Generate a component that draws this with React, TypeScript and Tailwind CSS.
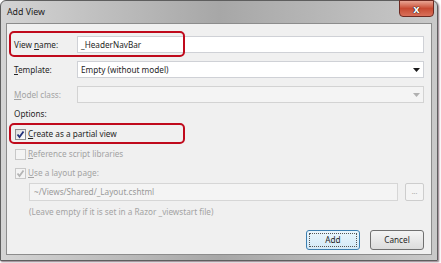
import React from 'react';

const font = { fontFamily: '"Noto Sans", "Open Sans", sans-serif' };

const Check: React.FC<{ checked?: boolean; disabled?: boolean }> = ({ checked, disabled }) => (
  <span
    className={`w-[11px] h-[11px] border flex items-center justify-center shrink-0 ${
      disabled ? 'border-[#c8c8c8] bg-[#f4f4f4]' : 'border-[#8e8f8f] bg-gradient-to-br from-[#dcdcdc] to-[#ffffff]'
    }`}
  >
    {checked && (
      <svg width="9" height="9" viewBox="0 0 9 9">
        <path
          d="M1.5 4.5 L3.5 7 L7.5 1.5"
          fill="none"
          stroke={disabled ? '#b4b4b4' : '#21307a'}
          strokeWidth="1.8"
        />
      </svg>
    )}
  </span>
);

const Arrow: React.FC<{ disabled?: boolean }> = ({ disabled }) => (
  <svg width="7" height="4" viewBox="0 0 7 4" className="mr-[3px]">
    <path d="M0 0 H7 L3.5 4 Z" fill={disabled ? '#b0b0b0' : '#1a1a1a'} />
  </svg>
);

export default function App() {
  return (
    <div className="w-[441px] h-[263px] bg-white text-[8.2px] leading-[12px]" style={font}>
      <div className="relative w-[438px] h-[261px] rounded-t-[6px] border border-[#5e5e5e] bg-gradient-to-r from-[#d4d4d4] via-[#a7a7a7] to-[#c9c9c9] flex flex-col shadow-[1px_1px_2px_rgba(60,20,40,0.6)]">
        {/* title bar */}
        <div className="h-[22px] flex items-center pl-[6px] text-[8.8px] text-[#1c1c1c]">Add View</div>
        <div className="absolute right-[3px] top-[-1px] w-[35px] h-[17px] rounded-b-[4px] border border-[#6d2a22] bg-gradient-to-b from-[#e8a493] via-[#c74a32] to-[#d9705a] flex items-center justify-center">
          <span className="text-white font-bold text-[11px] leading-none [text-shadow:0_0_1px_#000,0_0_1px_#000]">x</span>
        </div>

        {/* client area */}
        <div className="mx-[5px] h-[232px] border border-[#8c8c8c] bg-[#f0f0f0] pt-[12px] pl-[7px] pr-[7px] text-[#262626] flex flex-col">
          <div className="relative flex items-center h-[17px]">
            <span className="w-[63px] shrink-0">View <span className="underline">n</span>ame:</span>
            <div className="flex-1 h-[17px] bg-white border border-[#cfd1d6] flex items-center pl-[3px]">_HeaderNavBar</div>
            <div className="absolute left-[-5px] top-[-5px] w-[176px] h-[26px] rounded-[5px] border-2 border-[#c00a1c]" />
          </div>

          <div className="flex items-center h-[17px] mt-[8px]">
            <span className="w-[63px] shrink-0"><span className="underline">T</span>emplate:</span>
            <div className="flex-1 h-[17px] bg-white border border-[#cfd1d6] flex items-center justify-between pl-[3px]">
              <span>Empty (without model)</span>
              <Arrow />
            </div>
          </div>

          <div className="flex items-center h-[17px] mt-[8px]">
            <span className="w-[63px] shrink-0 text-[#a3a3a3]"><span className="underline">M</span>odel class:</span>
            <div className="flex-1 h-[17px] bg-[#f4f4f4] border border-[#d3d3d3] flex items-center justify-end">
              <Arrow disabled />
            </div>
          </div>

          <div className="mt-[5px] h-[12px]">Options:</div>

          <div className="relative flex items-center gap-[2px] h-[12px] mt-[8px] pl-[1px]">
            <Check checked />
            <span><span className="underline">C</span>reate as a partial view</span>
            <div className="absolute left-[-5px] top-[-5px] w-[176px] h-[21px] rounded-[5px] border-2 border-[#c00a1c]" />
          </div>

          <div className="flex items-center gap-[2px] h-[12px] mt-[8px] pl-[1px] text-[#a3a3a3]">
            <Check disabled />
            <span><span className="underline">R</span>eference script libraries</span>
          </div>

          <div className="flex items-center gap-[2px] h-[12px] mt-[7px] pl-[1px] text-[#a3a3a3]">
            <Check checked disabled />
            <span><span className="underline">U</span>se a layout page:</span>
          </div>

          <div className="flex items-center gap-[7px] h-[18px] mt-[4px] pl-[15px]">
            <div className="flex-1 h-[18px] bg-[#f4f4f4] border border-[#d6d6d6] flex items-center pl-[4px] text-[#9a9a9a]">
              ~/Views/Shared/_Layout.cshtml
            </div>
            <div className="w-[19px] h-[18px] rounded-[2px] border border-[#cdcdcd] bg-[#f4f4f4] flex items-center justify-center text-[#a8a8a8] text-[7px]">...</div>
          </div>

          <div className="mt-[5px] h-[12px] pl-[15px] text-[#a3a3a3]">(Leave empty if it is set in a Razor _viewstart file)</div>

          <div className="mt-[12px] flex justify-end gap-[10px]">
            <div className="w-[54px] h-[20px] rounded-[3px] border border-[#3c7fb1] bg-gradient-to-b from-[#eaf6fd] to-[#d3e9f7] p-[2px]">
              <div className="w-full h-full border border-dotted border-[#555] flex items-center justify-center">Add</div>
            </div>
            <div className="w-[54px] h-[20px] rounded-[3px] border border-[#707070] bg-gradient-to-b from-[#f4f4f4] to-[#dcdcdc] flex items-center justify-center">
              Cancel
            </div>
          </div>
        </div>
      </div>
    </div>
  );
}
